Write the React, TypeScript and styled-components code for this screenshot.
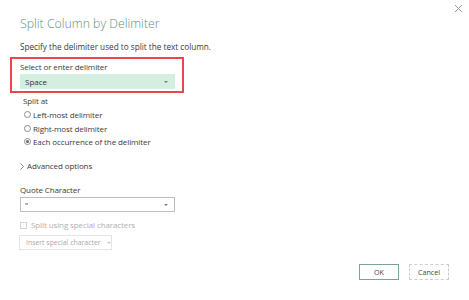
import React from 'react';
import styled, { createGlobalStyle } from 'styled-components';

const GlobalStyle = createGlobalStyle`
  html, body {
    margin: 0;
    padding: 0;
    background: #ffffff;
  }
  body {
    font-family: 'Segoe UI', 'Open Sans', 'Noto Sans', sans-serif;
    color: #444444;
  }
`;

const Dialog = styled.div`
  position: relative;
  width: 469px;
  height: 300px;
  box-sizing: border-box;
  padding: 14px 20px 0 20px;
  display: flex;
  flex-direction: column;
  background: #ffffff;
  overflow: hidden;
`;

const CloseButton = styled.button`
  position: absolute;
  top: 4px;
  left: 454px;
  width: 9px;
  height: 9px;
  padding: 0;
  border: none;
  background: transparent;
  display: flex;
`;

const Title = styled.h1`
  margin: 0;
  font-size: 12.3px;
  font-weight: 300;
  line-height: 20px;
  color: #5f8f7c;
`;

const Description = styled.p`
  margin: 6px 0 0 0;
  font-size: 8.2px;
  line-height: 13px;
  color: #3a3a3a;
`;

const Highlight = styled.div`
  margin: 4px 0 0 -10px;
  width: 174px;
  height: 36px;
  box-sizing: border-box;
  border: 2px solid #e9474b;
  padding: 2px 8px 0 8px;
  display: flex;
  flex-direction: column;
`;

const FieldLabel = styled.div`
  font-size: 8px;
  letter-spacing: -0.1px;
  line-height: 12px;
  color: #3a3a3a;
`;

const Select = styled.div<{ $active?: boolean }>`
  width: 155px;
  height: 15px;
  margin-top: 1px;
  box-sizing: border-box;
  display: flex;
  align-items: center;
  justify-content: space-between;
  padding: 0 6px 0 4px;
  font-size: 8px;
  color: #333333;
  background: ${p => (p.$active ? '#d4eee0' : '#ffffff')};
  border: 1px solid ${p => (p.$active ? '#d4eee0' : '#bdbdbd')};
`;

const Caret = styled.span<{ $muted?: boolean }>`
  width: 0;
  height: 0;
  border-left: 2.5px solid transparent;
  border-right: 2.5px solid transparent;
  border-top: 2.5px solid ${p => (p.$muted ? '#c4c4c4' : '#7a7a7a')};
`;

const SplitSection = styled.div`
  margin: 2px 0 0 3px;
  display: flex;
  flex-direction: column;
`;

const SectionLabel = styled.div`
  font-size: 8px;
  letter-spacing: -0.1px;
  line-height: 12px;
  margin-bottom: 1px;
  color: #3a3a3a;
`;

const RadioRow = styled.label`
  display: flex;
  align-items: center;
  gap: 2px;
  height: 13.5px;
  font-size: 8px;
  letter-spacing: -0.1px;
  color: #3a3a3a;
`;

const RadioCircle = styled.span<{ $checked?: boolean }>`
  width: 7px;
  height: 7px;
  margin-left: 1px;
  border-radius: 50%;
  border: 1px solid #8a8a8a;
  box-sizing: border-box;
  display: flex;
  align-items: center;
  justify-content: center;
  &::after {
    content: '';
    width: 3px;
    height: 3px;
    border-radius: 50%;
    background: ${p => (p.$checked ? '#666666' : 'transparent')};
  }
`;

const Expander = styled.div`
  margin-top: 11.5px;
  display: flex;
  align-items: center;
  gap: 3px;
  font-size: 8px;
  letter-spacing: -0.1px;
  line-height: 12px;
  color: #3a3a3a;
`;

const QuoteSection = styled.div`
  margin-top: 12px;
  display: flex;
  flex-direction: column;
`;

const CheckRow = styled.div`
  margin-top: 7px;
  display: flex;
  align-items: center;
  gap: 4px;
  font-size: 8px;
  letter-spacing: -0.1px;
  line-height: 12px;
  color: #b0b0b0;
`;

const CheckBox = styled.span`
  width: 7px;
  height: 7px;
  border: 1px solid #d4d4d4;
  box-sizing: border-box;
`;

const InsertButton = styled.div`
  margin: 4px 0 0 -1px;
  width: 93px;
  height: 15px;
  box-sizing: border-box;
  border: 1px solid #e4e4e4;
  display: flex;
  align-items: center;
  gap: 6px;
  padding-left: 6px;
  font-size: 6.9px;
  color: #a8a8a8;
`;

const Footer = styled.div`
  margin-top: 14px;
  display: flex;
  justify-content: flex-end;
  gap: 10px;
`;

const Button = styled.button<{ $primary?: boolean }>`
  width: 40px;
  height: 16px;
  padding: 0;
  box-sizing: border-box;
  font-family: inherit;
  font-size: 7.2px;
  color: #444444;
  background: #ffffff;
  border: 1px ${p => (p.$primary ? 'solid #79a593' : 'dashed #cccccc')};
`;

export default function App() {
  return (
    <>
      <GlobalStyle />
      <Dialog>
        <CloseButton aria-label="Close">
          <svg width="9" height="9" viewBox="0 0 9 9">
            <path d="M1 1 L8 8 M8 1 L1 8" stroke="#9a9a9a" strokeWidth="1" />
          </svg>
        </CloseButton>
        <Title>Split Column by Delimiter</Title>
        <Description>Specify the delimiter used to split the text column.</Description>
        <Highlight>
          <FieldLabel>Select or enter delimiter</FieldLabel>
          <Select $active>
            <span>Space</span>
            <Caret />
          </Select>
        </Highlight>
        <SplitSection>
          <SectionLabel>Split at</SectionLabel>
          <RadioRow>
            <RadioCircle />
            Left-most delimiter
          </RadioRow>
          <RadioRow>
            <RadioCircle />
            Right-most delimiter
          </RadioRow>
          <RadioRow>
            <RadioCircle $checked />
            Each occurrence of the delimiter
          </RadioRow>
        </SplitSection>
        <Expander>
          <svg width="4" height="7" viewBox="0 0 4 7">
            <path d="M0.5 0.5 L3.5 3.5 L0.5 6.5" stroke="#777777" strokeWidth="0.9" fill="none" />
          </svg>
          Advanced options
        </Expander>
        <QuoteSection>
          <FieldLabel>Quote Character</FieldLabel>
          <Select>
            <span>"</span>
            <Caret />
          </Select>
        </QuoteSection>
        <CheckRow>
          <CheckBox />
          Split using special characters
        </CheckRow>
        <InsertButton>
          Insert special character
          <Caret $muted />
        </InsertButton>
        <Footer>
          <Button $primary>OK</Button>
          <Button>Cancel</Button>
        </Footer>
      </Dialog>
    </>
  );
}
